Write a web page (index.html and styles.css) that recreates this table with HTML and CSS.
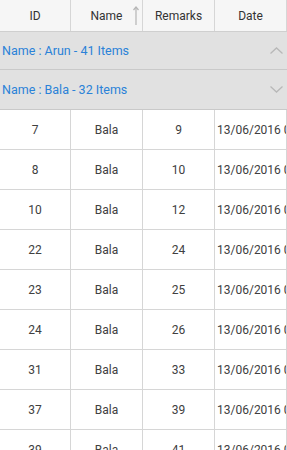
FILE: index.html
```html
<!DOCTYPE html>
<html>
<head>
<meta charset="utf-8">
<link rel="stylesheet" href="styles.css">
</head>
<body>
<div class="grid">
  <div class="header">
    <div class="hcell c1">ID</div>
    <div class="hcell c2">Name<svg class="sort" width="6" height="20" viewBox="0 0 6 20"><path d="M3 1 V19" stroke="#b5b5b5" stroke-width="1.2" fill="none"/><path d="M0.5 4 L3 1 L5.5 4" stroke="#b5b5b5" stroke-width="1.2" fill="none"/></svg></div>
    <div class="hcell c3">Remarks</div>
    <div class="hcell c4">Date</div>
  </div>
  <div class="group g1"><span class="gtext">Name : Arun - 41 Items</span><svg class="chev" width="13" height="7" viewBox="0 0 13 7"><path d="M0.5 6.5 L6.5 1 L12.5 6.5" stroke="#b8b8b8" stroke-width="1.3" fill="none"/></svg></div>
  <div class="group g2"><span class="gtext">Name : Bala - 32 Items</span><svg class="chev" width="13" height="7" viewBox="0 0 13 7"><path d="M0.5 0.5 L6.5 6 L12.5 0.5" stroke="#b8b8b8" stroke-width="1.3" fill="none"/></svg></div>
  <div class="row"><div class="cell c1">7</div><div class="cell c2">Bala</div><div class="cell c3">9</div><div class="cell c4 date">13/06/2016 00:00:00</div></div>
  <div class="row"><div class="cell c1">8</div><div class="cell c2">Bala</div><div class="cell c3">10</div><div class="cell c4 date">13/06/2016 00:00:00</div></div>
  <div class="row"><div class="cell c1">10</div><div class="cell c2">Bala</div><div class="cell c3">12</div><div class="cell c4 date">13/06/2016 00:00:00</div></div>
  <div class="row"><div class="cell c1">22</div><div class="cell c2">Bala</div><div class="cell c3">24</div><div class="cell c4 date">13/06/2016 00:00:00</div></div>
  <div class="row"><div class="cell c1">23</div><div class="cell c2">Bala</div><div class="cell c3">25</div><div class="cell c4 date">13/06/2016 00:00:00</div></div>
  <div class="row"><div class="cell c1">24</div><div class="cell c2">Bala</div><div class="cell c3">26</div><div class="cell c4 date">13/06/2016 00:00:00</div></div>
  <div class="row"><div class="cell c1">31</div><div class="cell c2">Bala</div><div class="cell c3">33</div><div class="cell c4 date">13/06/2016 00:00:00</div></div>
  <div class="row"><div class="cell c1">37</div><div class="cell c2">Bala</div><div class="cell c3">39</div><div class="cell c4 date">13/06/2016 00:00:00</div></div>
  <div class="row"><div class="cell c1">39</div><div class="cell c2">Bala</div><div class="cell c3">41</div><div class="cell c4 date">13/06/2016 00:00:00</div></div>
</div>
</body>
</html>
```
FILE: styles.css
```css
html, body {
  margin: 0;
  padding: 0;
  background: #ffffff;
  overflow: hidden;
}
body {
  font-family: Roboto, "Liberation Sans", sans-serif;
  font-size: 12px;
  color: #333333;
}
.grid {
  width: 287px;
  height: 450px;
  overflow: hidden;
}
.header {
  display: flex;
  height: 32px;
  background: #f6f6f6;
  box-sizing: border-box;
  border-bottom: 1px solid #cfcfcf;
}
.hcell, .cell {
  box-sizing: border-box;
  border-right: 1px solid #d6d6d6;
  display: flex;
  align-items: center;
  justify-content: center;
  position: relative;
}
.c1 { width: 71px; }
.c2 { width: 72px; }
.c3 { width: 72px; }
.c4 { width: 72px; }
.hcell { color: #333333; }
.sort {
  position: absolute;
  right: 3px;
  top: 6px;
}
.group {
  display: flex;
  align-items: center;
  justify-content: space-between;
  background: #e1e1e1;
  box-sizing: border-box;
  border-bottom: 1px solid #c9c9c9;
  padding: 0 4px 0 2px;
  color: #2a82d8;
  font-size: 12.5px;
}
.g1 { height: 38px; }
.g2 { height: 40px; }
.row {
  display: flex;
  height: 40px;
  box-sizing: border-box;
  border-bottom: 1px solid #d6d6d6;
}
.cell { color: #404040; }
.date {
  justify-content: flex-start;
  padding-left: 2px;
  white-space: nowrap;
  overflow: hidden;
}
```
